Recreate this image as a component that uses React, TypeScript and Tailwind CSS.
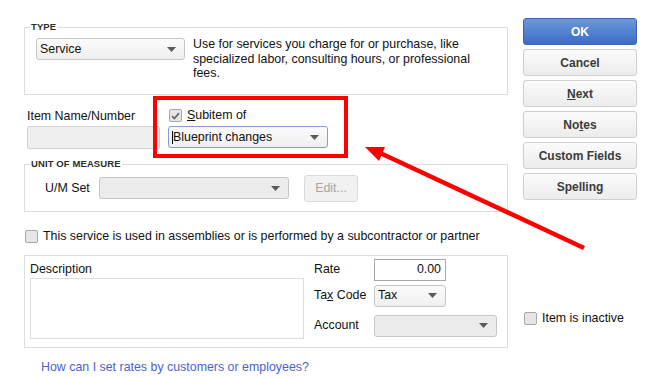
import type { ReactNode } from 'react';

function Caret() {
  return (
    <svg width="9" height="5" viewBox="0 0 9 5" className="shrink-0">
      <path d="M0 0 H9 L4.5 5 Z" fill="#5a5a5a" />
    </svg>
  );
}

function Select({
  width,
  label,
  tone = 'light',
  focused = false,
}: {
  width: string;
  label?: ReactNode;
  tone?: 'light' | 'dim';
  focused?: boolean;
}) {
  const bg =
    tone === 'dim'
      ? 'bg-[#ececec]'
      : 'bg-gradient-to-b from-[#fbfbfb] to-[#efefef]';
  const border = focused ? 'border-[#7f9fd6]' : 'border-[#c6c6c6]';
  return (
    <div
      className={`${width} h-[22px] flex items-center justify-between pl-[3px] pr-[8px] border ${border} ${bg} rounded-[3px]`}
    >
      <span className="leading-none">{label}</span>
      <Caret />
    </div>
  );
}

function Checkbox({ checked = false }: { checked?: boolean }) {
  return (
    <div className="w-[13px] h-[13px] rounded-[2px] border border-[#a9a9a9] bg-[#e6e6e6] flex items-center justify-center shrink-0">
      {checked && (
        <svg width="9" height="8" viewBox="0 0 9 8">
          <path d="M1 4.2 L3.4 6.5 L8 1.2" stroke="#6b6b6b" strokeWidth="1.8" fill="none" />
        </svg>
      )}
    </div>
  );
}

function Legend({ children }: { children: ReactNode }) {
  // small caption sitting on the group border
  return (
    <span className="absolute left-[5px] top-[-6px] bg-white px-[1px] text-[9.5px] font-bold text-[#2d2d2d] leading-none tracking-[0.1px]">
      {children}
    </span>
  );
}

function SideButton({ children, primary = false }: { children: ReactNode; primary?: boolean }) {
  return (
    <div
      className={`h-[27px] flex items-center justify-center rounded-[3px] border text-[12px] font-bold ${
        primary
          ? 'border-[#3a63b0] bg-gradient-to-b from-[#6b97dd] to-[#3e6cc4] text-white'
          : 'border-[#cfcfcf] bg-gradient-to-b from-[#fbfbfb] to-[#ececec] text-[#3b3b3b]'
      }`}
    >
      {children}
    </div>
  );
}

export default function App() {
  return (
    <div
      className="relative w-[658px] h-[378px] bg-white overflow-hidden text-[12.4px] text-[#111]"
      style={{ fontFamily: '"Liberation Sans", Arial, sans-serif' }}
    >
      <div className="flex">
        {/* LEFT FORM */}
        <div className="w-[508px] pl-[24px]">
          {/* TYPE */}
          <div className="relative mt-[27px] h-[68px] border border-[#dddddd] pl-[11px] pt-[10px] flex gap-[8px]">
            <Legend>TYPE</Legend>
            <Select width="w-[149px]" label="Service" />
            <p className="w-[290px] leading-[14.5px] -mt-[1px]">
              Use for services you charge for or purchase, like specialized labor, consulting hours, or professional
              fees.
            </p>
          </div>

          {/* NAME / SUBITEM */}
          <div className="flex pl-[3px] mt-[14px]">
            <div className="w-[133px]">
              <div className="h-[17px] leading-[14px]">Item Name/Number</div>
              <div className="h-[23px] border border-[#d2d2d2] bg-[#efefef] rounded-[2px]" />
            </div>
            <div className="ml-[8px]">
              <div className="h-[17px] flex items-start gap-[5px] pl-[1px]">
                <Checkbox checked />
                <span className="leading-[13px]">
                  <u>S</u>ubitem of
                </span>
              </div>
              <Select
                width="w-[160px]"
                focused
                label={
                  <span className="flex items-center">
                    <span className="w-px h-[13px] bg-black" />
                    Blueprint changes
                  </span>
                }
              />
            </div>
          </div>

          {/* UNIT OF MEASURE */}
          <div className="relative mt-[15px] h-[48px] border border-[#dddddd] flex items-center pl-[20px]">
            <Legend>UNIT OF MEASURE</Legend>
            <span className="w-[54px]">U/M Set</span>
            <Select width="w-[190px]" tone="dim" />
            <div className="ml-[15px] w-[54px] h-[27px] flex items-center justify-center border border-[#dadada] rounded-[3px] bg-[#f1f1f1] text-[#a5a5a5]">
              Edit...
            </div>
          </div>

          {/* ASSEMBLY CHECK */}
          <div className="flex items-center gap-[5px] mt-[15px] pl-[1px]">
            <Checkbox />
            <span>This service is used in assemblies or is performed by a subcontractor or partner</span>
          </div>

          {/* DESCRIPTION / RATE */}
          <div className="mt-[9px] h-[93px] border border-[#dddddd] flex pl-[5px]">
            <div className="pt-[6px]">
              <div className="h-[16px] leading-[14px]">Description</div>
              <div className="w-[274px] h-[61px] border border-[#dddddd]" />
            </div>
            <div className="ml-[10px] pt-[3px]">
              <div className="flex items-center h-[22px]">
                <span className="w-[60px]">Rate</span>
                <div className="w-[72px] h-[22px] border border-[#a8a8a8] flex items-center justify-end pr-[4px]">
                  0.00
                </div>
              </div>
              <div className="flex items-center mt-[4px]">
                <span className="w-[60px]">
                  Ta<u>x</u> Code
                </span>
                <Select width="w-[72px]" label="Tax" />
              </div>
              <div className="flex items-center mt-[8px]">
                <span className="w-[60px]">Account</span>
                <Select width="w-[123px]" tone="dim" />
              </div>
            </div>
          </div>

          <div className="mt-[10px] pl-[17px] text-[#4b5fd0]">How can I set rates by customers or employees?</div>
        </div>

        {/* RIGHT BUTTONS */}
        <div className="ml-[15px] w-[114px] pt-[18px]">
          <div className="flex flex-col gap-[4px]">
            <SideButton primary>OK</SideButton>
            <SideButton>Cancel</SideButton>
            <SideButton>
              <span>
                <u>N</u>ext
              </span>
            </SideButton>
            <SideButton>
              <span>
                No<u>t</u>es
              </span>
            </SideButton>
            <SideButton>Custom Fields</SideButton>
            <SideButton>
              <span>
                Spellin<u>g</u>
              </span>
            </SideButton>
          </div>
          <div className="flex items-center gap-[5px] mt-[109px] pl-[1px]">
            <Checkbox />
            <span>Item is inactive</span>
          </div>
        </div>
      </div>

      {/* ANNOTATION: red box + arrow */}
      <div className="absolute left-[153px] top-[96px] w-[195px] h-[62px] border-4 border-[#ff0000] pointer-events-none" />
      <svg className="absolute left-0 top-0 pointer-events-none" width="658" height="378">
        <line x1="584" y1="248" x2="378" y2="152" stroke="#ff0000" strokeWidth="4.5" />
        <polygon points="365,147 385,147 379,161" fill="#ff0000" />
      </svg>
    </div>
  );
}
